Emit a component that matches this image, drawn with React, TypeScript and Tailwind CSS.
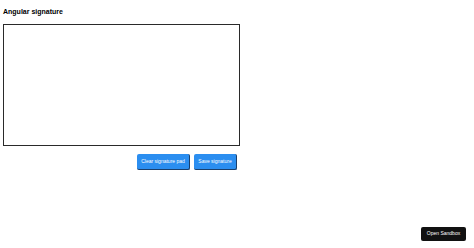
export default function App() {
  return (
    <div className="relative h-[248px] w-[474px] bg-white font-['Liberation_Sans',Arial,sans-serif] text-black">
      <div className="px-[3px] pt-[8px]">
        <h3 className="text-[7px] font-bold leading-[8px]">Angular signature</h3>
        <div className="mt-[8px] h-[122px] w-[237px] border-[1.5px] border-[#2a2a2a] bg-white" />
        <div className="mt-[8px] flex w-[234px] justify-end gap-[4px]">
          <button className="h-[16px] w-[53px] rounded-[2px] border-b border-r border-[#1b3f6b] bg-[#2b8ef0] text-[5px] text-white">
            Clear signature pad
          </button>
          <button className="h-[16px] w-[43px] rounded-[2px] border-b border-r border-[#1b3f6b] bg-[#2b8ef0] text-[5px] text-white">
            Save signature
          </button>
        </div>
      </div>
      <button className="absolute left-[421px] top-[227px] h-[14px] w-[45px] rounded-[2px] bg-[#111] text-[5px] text-white">
        Open Sandbox
      </button>
    </div>
  );
}
